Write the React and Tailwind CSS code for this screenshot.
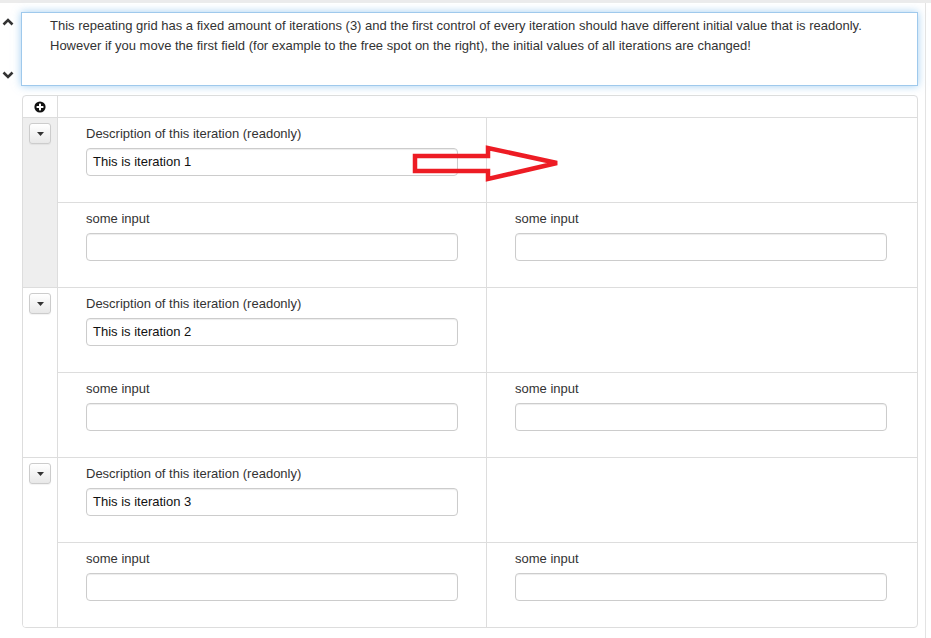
import React from "react";

const iterations = [1, 2, 3];

function ChevronUp() {
  return (
    <svg width="12" height="8" viewBox="0 0 12 8" className="block">
      <polyline points="1.5,6.5 6,2 10.5,6.5" fill="none" stroke="#333" strokeWidth="2.6" />
    </svg>
  );
}

function ChevronDown() {
  return (
    <svg width="12" height="8" viewBox="0 0 12 8" className="block">
      <polyline points="1.5,1.5 6,6 10.5,1.5" fill="none" stroke="#333" strokeWidth="2.6" />
    </svg>
  );
}

function PlusCircle() {
  return (
    <svg width="12" height="12" viewBox="0 0 12 12" className="block">
      <circle cx="6" cy="6" r="5.6" fill="#111" />
      <rect x="5" y="2.6" width="2" height="6.8" fill="#fff" />
      <rect x="2.6" y="5" width="6.8" height="2" fill="#fff" />
    </svg>
  );
}

function Field({ label, value }) {
  return (
    <div className="pt-[7px] px-[28px]">
      <div className="leading-[18px] h-[18px] mb-[5px] text-[#333]">{label}</div>
      <div className="w-[372px] h-[28px] border border-[#ccc] rounded-[4px] bg-white shadow-[inset_0_1px_1px_rgba(0,0,0,0.075)] px-[6px] leading-[26px] text-[#111]">
        {value}
      </div>
    </div>
  );
}

function Iteration({ n, selected }) {
  return (
    <div className="flex border-t border-[#ddd]">
      <div
        className={
          "w-[35px] shrink-0 border-r border-[#ddd] pt-[5px] flex justify-center items-start " +
          (selected ? "bg-[#eee]" : "bg-white")
        }
      >
        <button className="w-[22px] h-[21px] rounded-[3px] border border-[#ccc] bg-linear-to-b from-white to-[#e8e8e8] shadow-[0_1px_1px_rgba(0,0,0,0.05)] flex items-center justify-center">
          <svg width="7" height="4" viewBox="0 0 7 4" className="block">
            <polygon points="0,0 7,0 3.5,4" fill="#333" />
          </svg>
        </button>
      </div>
      <div className="flex-1">
        <div className="flex h-[84px]">
          <div className="w-[429px] border-r border-[#ddd]">
            <Field label="Description of this iteration (readonly)" value={`This is iteration ${n}`} />
          </div>
          <div className="flex-1" />
        </div>
        <div className="flex h-[85px] border-t border-[#ddd]">
          <div className="w-[429px] border-r border-[#ddd]">
            <Field label="some input" value="" />
          </div>
          <div className="flex-1">
            <Field label="some input" value="" />
          </div>
        </div>
      </div>
    </div>
  );
}

export default function App() {
  return (
    <div className="relative w-[931px] h-[638px] bg-white overflow-hidden font-['Liberation_Sans',Arial,sans-serif] text-[13px] text-[#333]">
      <div className="h-[3px] bg-[#ececec]" />
      <div className="flex">
        <div className="w-[925px]">
          {/* description */}
          <div className="flex mt-[9px]">
            <div className="w-[21px] shrink-0 flex flex-col pl-[2px] pt-[6px]">
              <ChevronUp />
              <div className="h-[45px]" />
              <ChevronDown />
            </div>
            <div className="w-[897px] h-[74px] border border-[#9fc9ec] shadow-[0_0_8px_rgba(102,175,233,0.6)] pt-[3px] pl-[28px] leading-[20px] text-[#333]">
              <div>
                This repeating grid has a fixed amount of iterations (3) and the first control of every iteration should have different initial value that is readonly.
              </div>
              <div>
                However if you move the first field (for example to the free spot on the right), the initial values of all iterations are changed!
              </div>
            </div>
          </div>

          {/* repeating grid */}
          <div className="ml-[22px] mt-[9px] w-[896px] border border-[#ddd] rounded-[4px] overflow-hidden">
            <div className="flex h-[21px]">
              <div className="w-[35px] shrink-0 border-r border-[#ddd] flex items-center justify-center">
                <PlusCircle />
              </div>
              <div className="flex-1" />
            </div>
            {iterations.map((n) => (
              <Iteration key={n} n={n} selected={n === 1} />
            ))}
          </div>
        </div>
        <div className="w-px h-[635px] bg-[#e3e3e3]" />
      </div>

      {/* red arrow annotation */}
      <svg className="absolute left-0 top-0 pointer-events-none" width="931" height="638">
        <polygon
          points="415,156 488,156 488,148 557,163 488,179 488,171 415,171"
          fill="none"
          stroke="#ed1c24"
          strokeWidth="4.5"
        />
      </svg>
    </div>
  );
}
